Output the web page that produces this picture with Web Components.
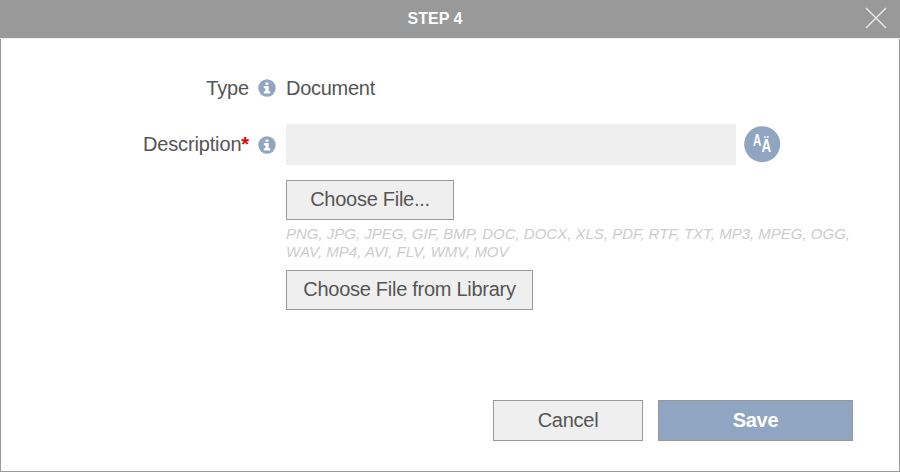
<!DOCTYPE html>
<html>
<head>
<meta charset="utf-8">
<title>Step 4</title>
<style>
  html, body { margin: 0; height: 100%; background: #fff; }
  body { font-family: "Liberation Sans", Arial, sans-serif; color: #555; }
</style>
</head>
<body>
<step-dialog heading="STEP 4">
  <form-row label="Type" class="type"><span>Document</span></form-row>
  <form-row label="Description" required class="desc">
    <text-box></text-box>
    <translate-button></translate-button>
  </form-row>
  <form-row class="file">
    <file-picker></file-picker>
  </form-row>
  <plain-button slot="actions" style="width:150px">Cancel</plain-button>
  <plain-button slot="actions" primary style="width:195px">Save</plain-button>
</step-dialog>

<script>
class BaseEl extends HTMLElement {
  constructor(html) {
    super();
    this.attachShadow({ mode: "open" }).innerHTML = html;
  }
}

class StepDialog extends BaseEl {
  constructor() {
    super(`
      <style>
        :host { display: flex; flex-direction: column; box-sizing: border-box; width: 900px; height: 472px; border: solid #999; border-width: 0 1px 1px 1px; background: #fff; }
        header { position: relative; height: 38px; margin: 0 -1px; padding-right: 30px; background: #999; color: #fff; display: flex; align-items: center; justify-content: center; font-weight: bold; font-size: 16px; border-bottom: 1px solid #eee; }
        header svg { position: absolute; right: 13px; top: 7px; }
        main { flex: 1; display: flex; flex-direction: column; padding-top: 31px; }
        footer { display: flex; justify-content: flex-end; gap: 15px; padding: 0 46px 30px 0; }
      </style>
      <header><span id="t"></span>
        <svg width="22" height="22" viewBox="0 0 22 22" fill="none" stroke="#eee" stroke-width="1.3"><path d="M1 1L21 21M21 1L1 21"/></svg>
      </header>
      <main><slot></slot></main>
      <footer><slot name="actions"></slot></footer>`);
  }
  connectedCallback() { this.shadowRoot.getElementById("t").textContent = this.getAttribute("heading"); }
}

class FormRow extends BaseEl {
  constructor() {
    super(`
      <style>
        :host { display: flex; align-items: center; font-size: 20px; letter-spacing: -.27px; }
        :host(.type) { height: 36px; margin-bottom: 18px; }
        :host(.desc) { height: 41px; margin-bottom: 15px; }
        :host(.file) { align-items: flex-start; }
        .label { width: 248px; text-align: right; white-space: nowrap; letter-spacing: -.15px; }
        .label b { color: #e00; font-weight: bold; }
        .tip { width: 37px; flex: none; padding-left: 8.5px; box-sizing: border-box; display: flex; }
        .tip svg { display: block; }
        .body { display: flex; align-items: inherit; }
      </style>
      <div class="label"></div>
      <div class="tip"></div>
      <div class="body"><slot></slot></div>`);
  }
  connectedCallback() {
    const sr = this.shadowRoot;
    if (this.hasAttribute("label")) {
      sr.querySelector(".label").innerHTML = this.getAttribute("label") + (this.hasAttribute("required") ? "<b>*</b>" : "");
      sr.querySelector(".tip").innerHTML = `<svg width="18" height="18" viewBox="0 0 18 18"><circle cx="9" cy="9" r="8.7" fill="#8fa5c2"/><path fill="#fff" d="M7.4 3.4h3v2.3h-3zM5.8 7h4.8v5.2h1.6v2.3H5.8v-2.3h1.6V9.2H5.8z"/></svg>`;
    }
  }
}

class TextBox extends BaseEl {
  constructor() {
    super(`
      <style>
        :host { display: block; width: 450px; height: 41px; background: #efefef; }
      </style>`);
  }
}

class TranslateButton extends BaseEl {
  constructor() {
    super(`
      <style>
        :host { display: block; width: 37px; height: 37px; margin-left: 8px; }
        svg { display: block; }
        text { font-family: "Liberation Sans", Arial, sans-serif; font-weight: bold; fill: #fff; }
      </style>
      <svg width="37" height="37" viewBox="0 0 37 37">
        <circle cx="18.2" cy="18.2" r="18" fill="#8fa5c2"/>
        <text transform="translate(9 19.5) scale(.72 1)" font-size="16">A</text>
        <text transform="translate(17.4 26) scale(.72 1)" font-size="18.5">Ä</text>
      </svg>`);
  }
}

class PlainButton extends BaseEl {
  constructor() {
    super(`
      <style>
        :host { display: flex; align-items: center; justify-content: center; box-sizing: border-box; height: 41px; border: 1px solid #999; background: #efefef; color: #555; font-size: 20px; letter-spacing: -.27px; white-space: nowrap; }
        :host([primary]) { background: #8fa5c2; color: #fff; font-weight: bold; }
      </style>
      <slot></slot>`);
  }
}

class FilePicker extends BaseEl {
  constructor() {
    super(`
      <style>
        :host { display: block; width: 570px; }
        p { margin: 5px 0 9px; font-size: 15px; line-height: 18px; font-style: italic; color: #ccc; letter-spacing: 0; }
        plain-button { height: 40px; padding-bottom: 2px; }
      </style>
      <plain-button style="width:168px">Choose File...</plain-button>
      <p>PNG, JPG, JPEG, GIF, BMP, DOC, DOCX, XLS, PDF, RTF, TXT, MP3, MPEG, OGG, WAV, MP4, AVI, FLV, WMV, MOV</p>
      <plain-button style="width:247px">Choose File from Library</plain-button>`);
  }
}

customElements.define("plain-button", PlainButton);
customElements.define("text-box", TextBox);
customElements.define("translate-button", TranslateButton);
customElements.define("file-picker", FilePicker);
customElements.define("form-row", FormRow);
customElements.define("step-dialog", StepDialog);
</script>
</body>
</html>
